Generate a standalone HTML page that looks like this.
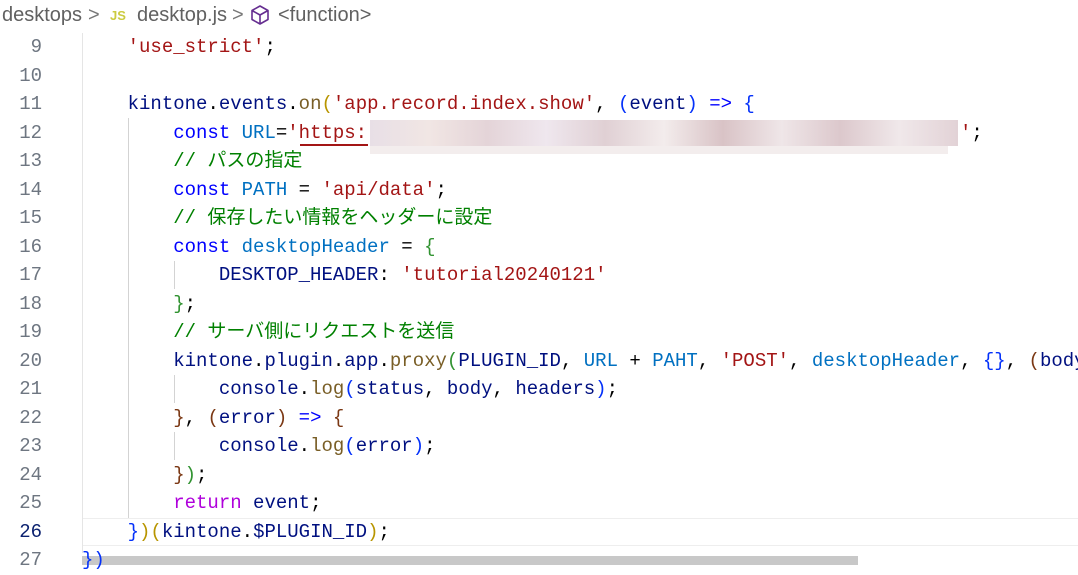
<!DOCTYPE html>
<html><head><meta charset="utf-8"><style>
body{margin:0;width:1078px;height:565px;overflow:hidden;background:#fff;position:relative;font-family:"Liberation Mono","Noto Sans CJK JP",monospace;}
.bc{position:absolute;left:0;top:0;height:32px;width:1078px;font-family:"Liberation Sans",sans-serif;font-size:20px;color:#616161;line-height:30px;white-space:nowrap}
.bc span{position:absolute;top:0}
.ln{position:absolute;left:0;width:42px;text-align:right;font-size:19px;color:#6e7681;height:28.5px;line-height:28.5px}
.cl{position:absolute;left:82px;font-size:19px;height:28.5px;line-height:28.5px;white-space:pre;color:#000}
.k{color:#0000ff}.s{color:#a31515}.c{color:#008000}.f{color:#795e26}.v{color:#001080}.n{color:#0070c1}.r{color:#af00db}
.b1{color:#0431fa}.b2{color:#319331}.b3{color:#7b3814}.b0{color:#b89500}
.g{position:absolute;width:1px;background:#d3d3d3}
</style></head><body>
<div class="bc"><span style="left:2px">desktops</span><span style="left:88px;color:#777">&gt;</span><span style="left:110px;color:#cbcb41;font-size:13px;font-weight:bold;top:1px">JS</span><span style="left:137px">desktop.js</span><span style="left:232px;color:#777">&gt;</span><svg style="position:absolute;left:249px;top:4px" width="22" height="22" viewBox="0 0 22 22"><path d="M11 2 L19 6.5 L19 15.5 L11 20 L3 15.5 L3 6.5 Z M3 6.5 L11 11 L19 6.5 M11 11 L11 20" fill="none" stroke="#652d90" stroke-width="1.6" stroke-linejoin="round"/></svg><span style="left:278px">&lt;function&gt;</span></div>
<div style="position:absolute;left:82px;top:518px;width:996px;height:28px;border-top:1px solid #eee;border-bottom:1px solid #eee;box-sizing:border-box"></div>
<div class="g" style="left:82px;top:33px;height:520px;background:#e5e5e5"></div>
<div class="g" style="left:128px;top:118px;height:400px"></div>
<div class="g" style="left:174px;top:261px;height:28px"></div>
<div class="g" style="left:174px;top:375px;height:28px"></div>
<div class="g" style="left:174px;top:432px;height:28px"></div>
<div style="position:absolute;left:370px;top:120px;width:588px;height:26px;background:linear-gradient(90deg,#e8dfe6,#f1e6e4,#e4d4d8,#efe7ee,#e0d0d4,#f3ecec,#d9c3c6,#efe6e8,#dcc8cc,#f0e8ea,#e2d2d6)"></div>
<div style="position:absolute;left:370px;top:146px;width:578px;height:8px;background:#f3eded"></div>
<div style="position:absolute;left:300px;top:144px;width:68px;height:2px;background:#a31515"></div>
<div style="position:absolute;left:82px;top:556px;width:776px;height:9px;background:#c8c8c8"></div>
<div id="c"></div>
<script>
var L=[
["9","    <span class=s>'use_strict'</span>;"],
["10",""],
["11","    <span class=v>kintone</span>.<span class=v>events</span>.<span class=f>on</span><span class=b0>(</span><span class=s>'app.record.index.show'</span>, <span class=b1>(</span><span class=v>event</span><span class=b1>)</span> <span class=k>=&gt;</span> <span class=b1>{</span>"],
["12","        <span class=k>const</span> <span class=n>URL</span>=<span class=s>'https:</span>                                                    <span class=s>'</span>;"],
["13","        <span class=c>// パスの指定</span>"],
["14","        <span class=k>const</span> <span class=n>PATH</span> = <span class=s>'api/data'</span>;"],
["15","        <span class=c>// 保存したい情報をヘッダーに設定</span>"],
["16","        <span class=k>const</span> <span class=n>desktopHeader</span> = <span class=b2>{</span>"],
["17","            <span class=v>DESKTOP_HEADER</span>: <span class=s>'tutorial20240121'</span>"],
["18","        <span class=b2>}</span>;"],
["19","        <span class=c>// サーバ側にリクエストを送信</span>"],
["20","        <span class=v>kintone</span>.<span class=v>plugin</span>.<span class=v>app</span>.<span class=f>proxy</span><span class=b2>(</span><span class=v>PLUGIN_ID</span>, <span class=n>URL</span> + <span class=n>PAHT</span>, <span class=s>'POST'</span>, <span class=n>desktopHeader</span>, <span class=b1>{}</span>, <span class=b3>(</span><span class=v>body</span>"],
["21","            <span class=v>console</span>.<span class=f>log</span><span class=b1>(</span><span class=v>status</span>, <span class=v>body</span>, <span class=v>headers</span><span class=b1>)</span>;"],
["22","        <span class=b3>}</span>, <span class=b3>(</span><span class=v>error</span><span class=b3>)</span> <span class=k>=&gt;</span> <span class=b3>{</span>"],
["23","            <span class=v>console</span>.<span class=f>log</span><span class=b1>(</span><span class=v>error</span><span class=b1>)</span>;"],
["24","        <span class=b3>}</span><span class=b2>)</span>;"],
["25","        <span class=r>return</span> <span class=v>event</span>;"],
["26","    <span class=b1>}</span><span class=b0>)</span><span class=b0>(</span><span class=v>kintone</span>.<span class=v>$PLUGIN_ID</span><span class=b0>)</span>;"],
["27","<span class=b1>}</span><span class=b1>)</span>"]];
var h="";L.forEach(function(l,i){var t=33+i*28.5;h+='<div class="ln" style="top:'+t+'px'+(l[0]=="26"?';color:#0b216f':'')+'">'+l[0]+'</div><div class="cl" style="top:'+t+'px">'+l[1]+'</div>';});
document.getElementById('c').innerHTML=h;
</script>
</body></html>
